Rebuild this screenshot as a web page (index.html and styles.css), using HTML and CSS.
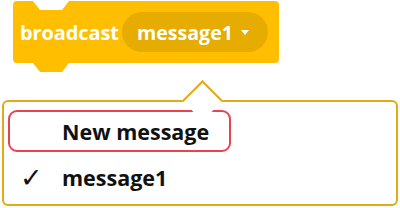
FILE: index.html
```html
<!DOCTYPE html>
<html lang="en">
<head>
    <meta charset="UTF-8">
    <title>broadcast</title>
    <link rel="stylesheet" href="styles.css">
</head>
<body>
    <div class="block">
        <span class="label">broadcast</span>
        <span class="field">message1 <span class="caret"></span></span>
    </div>

    <div class="menu">
        <div class="item selected">
            <span class="check"></span>
            <span class="text">New message</span>
        </div>
        <div class="item">
            <span class="check">✓</span>
            <span class="text">message1</span>
        </div>
    </div>
</body>
</html>
```

FILE: styles.css
```css
body {
    margin: 0;
    background: #fff;
    font-family: "Open Sans", "Noto Sans", sans-serif;
    width: 400px;
    height: 208px;
    overflow: hidden;
}

.block {
    position: relative;
    box-sizing: border-box;
    margin: 1px 0 0 13px;
    width: 266px;
    height: 62px;
    background: #ffbf00;
    border-radius: 4px;
    display: flex;
    align-items: center;
    padding-left: 7px;
}

/* notch on top */
.block::before {
    content: "";
    position: absolute;
    top: 0;
    left: 20px;
    width: 36px;
    height: 9px;
    background: #fff;
    clip-path: polygon(0 0, 36px 0, 29px 9px, 7px 9px);
}

/* tab below */
.block::after {
    content: "";
    position: absolute;
    top: 100%;
    left: 20px;
    width: 36px;
    height: 9px;
    background: #ffbf00;
    clip-path: polygon(0 0, 36px 0, 29px 9px, 7px 9px);
}

.label {
    color: #fff;
    font-size: 20px;
    font-weight: 700;
    letter-spacing: -0.1px;
}

.field {
    margin-left: 3px;
    height: 40px;
    box-sizing: border-box;
    padding: 0 19px 0 15px;
    border-radius: 20px;
    background: #e6ac00;
    color: #fff;
    font-size: 19.6px;
    font-weight: 700;
    display: flex;
    align-items: center;
}

.caret {
    margin-left: 8px;
    width: 0;
    height: 0;
    border-left: 4.5px solid transparent;
    border-right: 4.5px solid transparent;
    border-top: 5.5px solid #fff;
}

.menu {
    position: relative;
    box-sizing: border-box;
    margin: 37px 0 0 2px;
    width: 396px;
    height: 106px;
    border: 2px solid #e3a91a;
    border-radius: 6px;
    padding: 8px 4px 6px;
    display: flex;
    flex-direction: column;
    gap: 4px;
}

/* pointer to the field */
.menu::before {
    content: "";
    position: absolute;
    left: 184px;
    top: -16px;
    width: 27px;
    height: 27px;
    background: #fff;
    border-top: 2px solid #e3a91a;
    border-left: 2px solid #e3a91a;
    transform: rotate(45deg);
}

.item {
    box-sizing: border-box;
    width: 223px;
    height: 42px;
    border: 2px solid transparent;
    border-radius: 9px;
    display: flex;
    align-items: center;
    padding-left: 12px;
    color: #111;
    font-size: 21.5px;
    font-weight: 700;
}

.item.selected {
    border-color: #e8434f;
}

.check {
    width: 40px;
    font-family: "DejaVu Sans", sans-serif;
    font-weight: 400;
    font-size: 27px;
    margin-left: -2px;
    margin-right: 2px;
}
```
